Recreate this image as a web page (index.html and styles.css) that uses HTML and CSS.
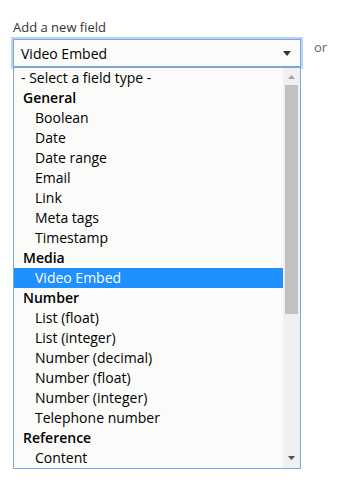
FILE: index.html
```html
<!DOCTYPE html>
<html>
<head>
<meta charset="utf-8">
<link rel="stylesheet" href="styles.css">
</head>
<body>
<div class="page">
  <div class="field">
    <label class="label">Add a new field</label>
    <div class="select">
      <span class="value">Video Embed</span>
      <svg class="caret" width="8" height="5" viewBox="0 0 8 5"><path d="M0 0H8L4 5Z" fill="#333"/></svg>
    </div>
    <div class="list">
      <div class="options">
        <div class="opt">- Select a field type -</div>
        <div class="grp">General</div>
        <div class="opt sub">Boolean</div>
        <div class="opt sub">Date</div>
        <div class="opt sub">Date range</div>
        <div class="opt sub">Email</div>
        <div class="opt sub">Link</div>
        <div class="opt sub">Meta tags</div>
        <div class="opt sub">Timestamp</div>
        <div class="grp">Media</div>
        <div class="opt sub selected">Video Embed</div>
        <div class="grp">Number</div>
        <div class="opt sub">List (float)</div>
        <div class="opt sub">List (integer)</div>
        <div class="opt sub">Number (decimal)</div>
        <div class="opt sub">Number (float)</div>
        <div class="opt sub">Number (integer)</div>
        <div class="opt sub">Telephone number</div>
        <div class="grp">Reference</div>
        <div class="opt sub">Content</div>
      </div>
      <div class="scrollbar">
        <svg class="arrow" width="7" height="4" viewBox="0 0 7 4"><path d="M0 4H7L3.5 0Z" fill="#a3a3a3"/></svg>
        <div class="track"><div class="thumb"></div></div>
        <svg class="arrow" width="7" height="4" viewBox="0 0 7 4"><path d="M0 0H7L3.5 4Z" fill="#505050"/></svg>
      </div>
    </div>
  </div>
  <div class="or">or</div>
</div>
</body>
</html>
```
FILE: styles.css
```css
html, body {
  margin: 0;
  padding: 0;
  background: #fff;
}
body {
  font-family: "Open Sans", "DejaVu Sans", sans-serif;
}
.page {
  display: flex;
  align-items: flex-start;
  padding: 18px 0 0 13px;
}
.field {
  display: flex;
  flex-direction: column;
  width: 288px;
}
.label {
  display: block;
  font-size: 13px;
  line-height: 18px;
  color: #333;
  margin-bottom: 3px;
}
.select {
  box-sizing: border-box;
  height: 28px;
  border: 1px solid #7ea6da;
  box-shadow: 0 0 0 2px #b8d5f3;
  background: #fbfbf9;
  display: flex;
  align-items: center;
  justify-content: space-between;
  padding: 0 9px 0 7px;
}
.value {
  font-size: 14px;
  color: #000;
  line-height: 20px;
  padding-top: 1px;
}
.caret {
  display: block;
  margin-top: 1px;
}
.list {
  position: relative;
  box-sizing: border-box;
  height: 402px;
  border: 1px solid #7ea6da;
  background: #fbfbf9;
  display: flex;
}
.options {
  flex: 1;
}
.opt, .grp {
  height: 20px;
  line-height: 20px;
  font-size: 14px;
  color: #000;
  white-space: nowrap;
}
.opt {
  padding-left: 7px;
}
.opt.sub {
  padding-left: 21px;
}
.grp {
  font-weight: 600;
  padding-left: 9px;
}
.selected {
  background: #1e90ff;
  color: #fff;
}
.scrollbar {
  width: 17px;
  background: #f0f0f0;
  display: flex;
  flex-direction: column;
  align-items: center;
}
.arrow {
  display: block;
  flex: none;
}
.scrollbar .arrow:first-child {
  margin: 7px 0 6px;
}
.scrollbar .arrow:last-child {
  margin: 0 0 8px;
}
.track {
  flex: 1;
  width: 100%;
  display: flex;
  justify-content: center;
}
.thumb {
  width: 13px;
  height: 229px;
  background: #c1c1c1;
}
.or {
  font-size: 13px;
  color: #666;
  margin: 20px 0 0 13px;
  line-height: 18px;
}
```
